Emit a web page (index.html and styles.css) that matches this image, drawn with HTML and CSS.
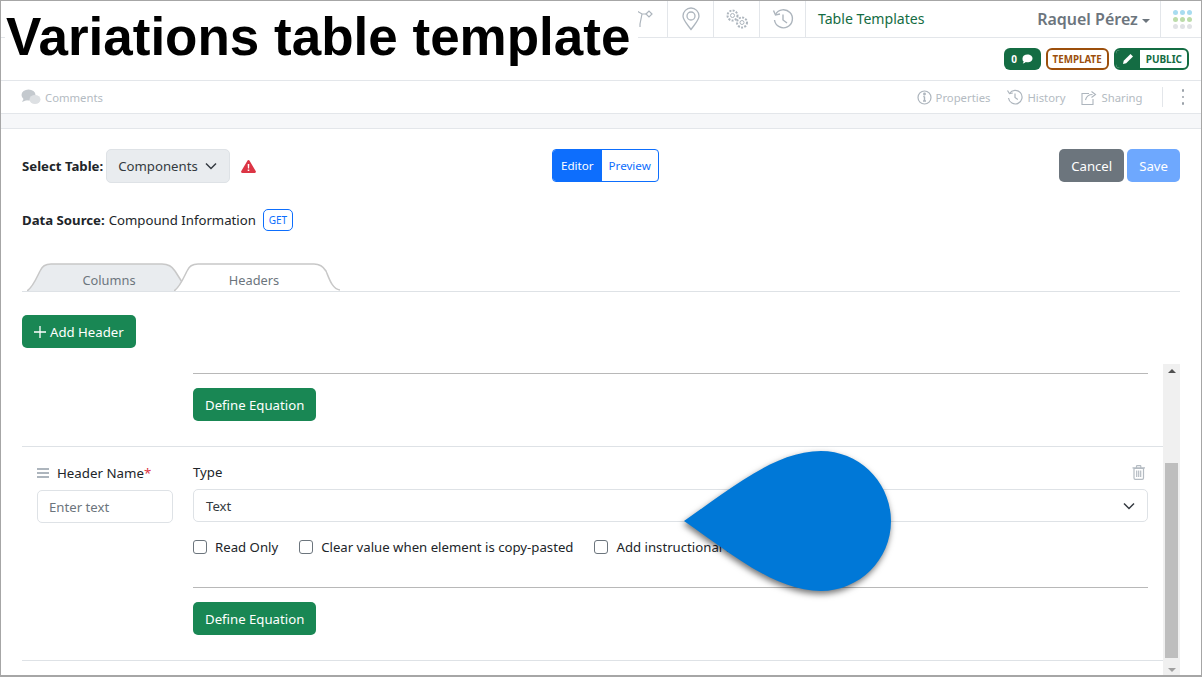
FILE: index.html
```html
<!DOCTYPE html>
<html lang="en">
<head>
    <meta charset="UTF-8">
    <title>Variations table template</title>
    <link rel="stylesheet" href="styles.css">
</head>
<body>

<div class="frame">
    <div class="topbar">
        <div class="nav-cell">
            <svg width="26" height="26" viewBox="0 0 26 26" fill="none" stroke="#adb5bd" stroke-width="1.200"><path d="M5 5l5 3h4M10 8l-2 10v3"/><path d="M14 8l3-3 3 3-3 3z"/></svg>
        </div>
        <div class="nav-cell">
            <svg width="20" height="24" viewBox="0 0 20 24" fill="none" stroke="#adb5bd" stroke-width="1.300"><path d="M10 22.500C6 17 2 13 2 9a8 8 0 0 1 16 0c0 4-4 8-8 13.500z"/><circle cx="10" cy="9" r="4"/></svg>
        </div>
        <div class="nav-cell">
            <svg width="26" height="24" viewBox="0 0 26 24" fill="none" stroke="#adb5bd"><circle cx="8.500" cy="8.500" r="2"/><circle cx="8.500" cy="8.500" r="5" stroke-width="2" stroke-dasharray="2 1.300"/><circle cx="18" cy="15.500" r="2"/><circle cx="18" cy="15.500" r="5" stroke-width="2" stroke-dasharray="2 1.300"/></svg>
        </div>
        <div class="nav-cell">
            <svg width="24" height="24" viewBox="0 0 24 24" fill="none" stroke="#adb5bd" stroke-width="1.400"><path d="M4.500 7.500A9 9 0 1 1 3.500 13"/><path d="M2.500 3.500l2 4.500 4.500-1M12 7.500V13l4 3"/></svg>
        </div>
        <div class="app-name">Table Templates</div>
        <div class="user">Raquel Pérez <span class="caret"></span></div>
        <div class="apps">
            <span class="dot blue"></span><span class="dot blue"></span><span class="dot blue"></span>
            <span class="dot green"></span><span class="dot green"></span><span class="dot green"></span>
            <span class="dot grey"></span><span class="dot grey"></span><span class="dot grey"></span>
        </div>
    </div>

    <div class="status-row">
        <span class="badge-comments">0
            <svg width="11" height="10" viewBox="0 0 11 10" fill="#fff"><path d="M5.500 0.500c2.800 0 5 1.700 5 3.900s-2.200 3.900-5 3.900c-.6 0-1.100-.1-1.600-.2-.9.8-2 1.200-3.300 1.300.6-.6 1-1.300 1.200-2.100C.900 7.600.500 6.100.500 4.400.500 2.200 2.700.500 5.500.500z"/></svg>
        </span>
        <span class="badge-template">TEMPLATE</span>
        <span class="badge-public">
            <span class="public-icon"><svg width="12" height="12" viewBox="0 0 12 12" fill="#fff"><path d="M8.500 1l2.500 2.500-6.800 6.800L1 11l.7-3.200z"/></svg></span>
            <span class="public-text">PUBLIC</span>
        </span>
    </div>

    <div class="action-row">
        <div class="action">
            <svg width="20" height="16" viewBox="0 0 20 16" fill="#c4c9ce"><ellipse cx="7.500" cy="6" rx="7" ry="5.500"/><path d="M3 9l-2 4 5-2z"/><ellipse cx="14" cy="10.500" rx="5.500" ry="4.500" fill="#dde0e3"/></svg>
            Comments
        </div>
        <div class="action-right">
            <div class="action">
                <svg width="15" height="15" viewBox="0 0 15 15" fill="none" stroke="#adb5bd" stroke-width="1.200"><circle cx="7.500" cy="7.500" r="6.500"/><path d="M7.500 6.500v4.500M6 11h3M6.300 6.500h1.200" stroke-width="1.400"/><circle cx="7.500" cy="4" r=".8" fill="#adb5bd"/></svg>
                Properties
            </div>
            <div class="action">
                <svg width="17" height="16" viewBox="0 0 17 16" fill="none" stroke="#adb5bd" stroke-width="1.200"><path d="M3.500 4.500A6.800 6.800 0 1 1 2.500 9"/><path d="M1.500 1.500l2 3.200 3.300-.7M9 4.500V8.500l2.800 2"/></svg>
                History
            </div>
            <div class="action">
                <svg width="16" height="15" viewBox="0 0 16 15" fill="none" stroke="#adb5bd" stroke-width="1.100"><path d="M8 3.500H1v11h11V9"/><path d="M4.500 10C5.500 6 8 4.500 11.500 4.500M10.500 1.500l4 3-4 3"/></svg>
                Sharing
            </div>
            <div class="kebab"><span></span><span></span><span></span></div>
        </div>
    </div>

    <div class="strip"></div>

    <div class="content">
        <div class="toolbar">
            <div class="toolbar-left">
                <strong class="select-label">Select Table:</strong>
                <div class="table-select">Components
                    <svg width="12" height="8" viewBox="0 0 12 8" fill="none" stroke="#343a40" stroke-width="1.500"><path d="M1 1.500l5 5 5-5"/></svg>
                </div>
                <svg class="warn" width="15" height="13" viewBox="0 0 15 13"><path d="M7.500 0c.5 0 .9.300 1.100.700l6.200 10.500c.4.800-.1 1.800-1.100 1.800H1.300C.3 13-.2 12 .2 11.200L6.400.700C6.600.300 7 0 7.500 0z" fill="#dc3545"/><path d="M6.700 4h1.600l-.2 4.500H6.900zM6.700 9.500h1.600v1.600H6.700z" fill="#fff"/></svg>
            </div>
            <div class="mode-group">
                <span class="mode active">Editor</span>
                <span class="mode">Preview</span>
            </div>
            <div class="toolbar-right">
                <button class="btn btn-cancel">Cancel</button>
                <button class="btn btn-save">Save</button>
            </div>
        </div>

        <div class="data-source">
            <strong>Data Source:</strong> Compound Information
            <span class="get-tag">GET</span>
        </div>

        <div class="tabs">
            <div class="tab">
                <svg class="tab-shape" width="156" height="28" viewBox="0 0 156 28"><path d="M0 28C6 24 9 16 13 8 15 3 19 1 24 1H135C141 1 145 3 148 8L155 19 151 28z" fill="#e9ecef"/><path d="M0 28C6 24 9 16 13 8 15 3 19 1 24 1H135C141 1 145 3 148 8L155 19" fill="none" stroke="#c8c8c8" stroke-width="1.500"/></svg>
                <span class="tab-text">Columns</span>
            </div>
            <div class="tab tab-current">
                <svg class="tab-shape" width="166" height="28" viewBox="0 0 166 28"><path d="M0 28C6 24 9 16 13 8 15 3 19 1 24 1H140C146 1 149 3 152 8 155 15 158 26 166 27V28z" fill="#fff"/><path d="M0 28C6 24 9 16 13 8 15 3 19 1 24 1H140C146 1 149 3 152 8 155 15 158 26 166 27" fill="none" stroke="#c8c8c8" stroke-width="1.500"/></svg>
                <span class="tab-text">Headers</span>
            </div>
        </div>

        <button class="btn btn-green btn-add">
            <svg width="12" height="12" viewBox="0 0 12 12" stroke="#fff" stroke-width="1.300"><path d="M6 0v12M0 6h12"/></svg>
            Add Header
        </button>

        <div class="scroll-area">
            <div class="rows">
                <div class="row row-partial">
                    <div class="row-main">
                        <hr class="rule">
                        <button class="btn btn-green">Define Equation</button>
                    </div>
                </div>
                <div class="row">
                    <div class="row-name">
                        <div class="name-label">
                            <span class="grip"><span></span><span></span><span></span></span>
                            Header Name<span class="required">*</span>
                        </div>
                        <div class="text-input">Enter text</div>
                    </div>
                    <div class="row-main">
                        <div class="type-head">
                            Type
                            <svg width="13" height="15" viewBox="0 0 13 15" fill="none" stroke="#b4bbc2" stroke-width="1.200"><path d="M2 3.500h9.500V13c0 .8-.5 1.300-1.300 1.300H3.300C2.500 14.300 2 13.800 2 13zM.5 2.800h12.500M4.500 2.500V1.200C4.500 .8 4.800 .6 5.200 .6h3c.4 0 .6 .2 .6 .6v1.300M4.700 5.500v6.500M6.700 5.500v6.500M8.700 5.500v6.500"/></svg>
                        </div>
                        <div class="type-select">Text
                            <svg width="12" height="8" viewBox="0 0 12 8" fill="none" stroke="#343a40" stroke-width="1.500"><path d="M1 1.500l5 5 5-5"/></svg>
                        </div>
                        <div class="checks">
                            <label class="check"><span class="box"></span>Read Only</label>
                            <label class="check"><span class="box"></span>Clear value when element is copy-pasted</label>
                            <label class="check"><span class="box"></span>Add instructional text</label>
                        </div>
                        <hr class="rule">
                        <button class="btn btn-green">Define Equation</button>
                    </div>
                </div>
            </div>
            <div class="scrollbar">
                <span class="arrow-up"></span>
                <div class="thumb-space"><div class="thumb"></div></div>
                <span class="arrow-down"></span>
            </div>
        </div>
    </div>

    <h1 class="title">Variations table template</h1>

    <svg class="drop" width="220" height="150" viewBox="0 0 220 150"><path d="M4 70C50 38 95 0 141 0 179 0 211 31 211 70 211 109 179 140 141 140 95 140 50 102 4 70z" fill="#0078d7"/></svg>
</div>

</body>
</html>
```

FILE: styles.css
```css
* {
    box-sizing: border-box;
}
body {
    margin: 0;
    font-family: "Noto Sans", Arial, sans-serif;
    font-size: 13.200px;
    color: #212529;
    background-color: #fff;
    overflow: hidden;
}
.frame {
    position: relative;
    width: 1202px;
    height: 677px;
    border: 1px solid #a6a6a6;
    border-bottom-width: 2px;
    overflow: hidden;
}
.topbar {
    display: flex;
    align-items: stretch;
    height: 37px;
    padding-left: 621px;
    border-bottom: 1px solid #e3e6ea;
}
.nav-cell {
    display: flex;
    align-items: center;
    justify-content: center;
    width: 46px;
    border-right: 1px solid #e3e6ea;
}
.app-name {
    padding-left: 12px;
    line-height: 36px;
    font-size: 14.100px;
    color: #146c43;
}
.user {
    margin-left: auto;
    padding-right: 10px;
    line-height: 36px;
    font-size: 16px;
    font-weight: 600;
    color: #6c757d;
}
.caret {
    display: inline-block;
    margin-left: 0;
    vertical-align: 2px;
    border-top: 4px solid #6c757d;
    border-left: 4px solid transparent;
    border-right: 4px solid transparent;
}
.apps {
    display: grid;
    grid-template-columns: repeat(3, 5px);
    gap: 2px;
    align-content: center;
    width: 41px;
    padding-left: 12px;
    border-left: 1px solid #e3e6ea;
}
.dot {
    width: 5px;
    height: 5px;
    border-radius: 50%;
}
.dot.blue {
    background-color: #a8dcf0;
}
.dot.green {
    background-color: #bcdcaa;
}
.dot.grey {
    background-color: #e0e2e5;
}
.status-row {
    display: flex;
    justify-content: flex-end;
    align-items: center;
    gap: 5px;
    height: 43px;
    padding-right: 12px;
    border-bottom: 1px solid #e3e6ea;
    font-size: 10px;
    font-weight: 700;
}
.badge-comments {
    display: flex;
    align-items: center;
    justify-content: center;
    gap: 5px;
    width: 37px;
    height: 22px;
    border-radius: 6px;
    background-color: #146c43;
    color: #fff;
}
.badge-template {
    display: flex;
    align-items: center;
    height: 22px;
    padding: 0 5px;
    border: 2px solid #9c4f0c;
    border-radius: 6px;
    font-size: 9.800px;
    color: #9c4f0c;
    white-space: nowrap;
}
.badge-public {
    display: flex;
    height: 22px;
    border: 2px solid #146c43;
    border-radius: 6px;
    overflow: hidden;
    color: #146c43;
}
.public-icon {
    display: flex;
    align-items: center;
    justify-content: center;
    width: 24px;
    background-color: #146c43;
}
.public-text {
    padding: 0 5px 0 6px;
    line-height: 18px;
}
.action-row {
    display: flex;
    justify-content: space-between;
    align-items: center;
    height: 33px;
    padding-left: 20px;
    padding-right: 17px;
    border-bottom: 1px solid #e3e6ea;
    font-size: 11.300px;
    color: #b4bbc2;
}
.action {
    display: flex;
    align-items: center;
    gap: 4px;
}
.action-right {
    display: flex;
    align-items: center;
    gap: 16px;
}
.kebab {
    display: flex;
    flex-direction: column;
    gap: 4px;
    height: 20px;
    justify-content: center;
    margin-left: 3px;
    padding-left: 19px;
    border-left: 1px solid #e3e6ea;
}
.kebab span {
    width: 2.500px;
    height: 2.500px;
    border-radius: 50%;
    background-color: #9aa1a8;
}
.strip {
    height: 15px;
    background-color: #f6f7f9;
    border-bottom: 1px solid #e3e6ea;
}
.content {
    padding: 20px 21px 0;
}
.toolbar {
    display: flex;
    align-items: flex-start;
    height: 34px;
}
.toolbar-left {
    display: flex;
    align-items: center;
    width: 530px;
}
.select-label {
    margin-right: 3px;
}
.table-select {
    display: flex;
    align-items: center;
    justify-content: space-between;
    width: 124px;
    height: 34px;
    padding: 0 12px 0 11px;
    border: 1px solid #dee2e6;
    border-radius: 5px;
    background-color: #e9ecef;
    color: #343a40;
}
.warn {
    margin-left: 11px;
}
.mode-group {
    display: flex;
    height: 33px;
    border: 1px solid #0d6efd;
    border-radius: 4px;
    overflow: hidden;
    font-size: 11.600px;
    line-height: 31px;
    color: #0d6efd;
}
.mode {
    padding: 0 7px;
}
.mode.active {
    padding: 0 8px;
    background-color: #0d6efd;
    color: #fff;
}
.toolbar-right {
    display: flex;
    flex: 1;
    justify-content: flex-end;
    gap: 3px;
}
.btn {
    display: inline-flex;
    align-items: center;
    justify-content: center;
    height: 33px;
    padding: 0 12px;
    border: none;
    border-radius: 5px;
    font-family: inherit;
    font-size: 13.200px;
    color: #fff;
}
.btn-cancel {
    background-color: #6c757d;
}
.btn-save {
    background-color: #6ea8fe;
}
.btn-green {
    background-color: #198754;
}
.data-source {
    display: flex;
    align-items: center;
    gap: 4px;
    height: 22px;
    margin-top: 26px;
}
.get-tag {
    display: inline-flex;
    align-items: center;
    justify-content: center;
    width: 30px;
    height: 22px;
    margin-left: 3px;
    border: 1px solid #0d6efd;
    border-radius: 5px;
    font-size: 10px;
    color: #0d6efd;
}
.tabs {
    display: flex;
    height: 29px;
    margin-top: 32px;
    padding-left: 5px;
    border-bottom: 1px solid #dee2e6;
}
.tab {
    position: relative;
    width: 156px;
    height: 28px;
    text-align: center;
    font-size: 12.800px;
    line-height: 34px;
    color: #6c757d;
}
.tab-current {
    width: 166px;
    margin-left: -9px;
}
.tab-shape {
    position: absolute;
    top: 0;
    left: 0;
}
.tab-text {
    position: relative;
    left: 4px;
}
.tab-current .tab-text {
    left: -3px;
}
.btn-add {
    gap: 4px;
    margin-top: 23px;
}
.scroll-area {
    display: flex;
    height: 313px;
    margin-top: 16px;
    overflow: hidden;
}
.rows {
    flex: 1;
    min-width: 0;
}
.row {
    display: flex;
    padding: 16px 15px 25px 15px;
    border-bottom: 1px solid #dee2e6;
}
.row-partial {
    padding-top: 9px;
    padding-left: 171px;
}
.row-name {
    width: 136px;
    margin-right: 20px;
}
.name-label {
    display: flex;
    align-items: center;
    gap: 8px;
    height: 20px;
    margin-bottom: 7px;
    font-size: 13.300px;
}
.grip {
    display: flex;
    flex-direction: column;
    gap: 2px;
}
.grip span {
    width: 12px;
    height: 2px;
    background-color: #adb5bd;
}
.required {
    margin-left: -8px;
    color: #dc3545;
}
.text-input {
    height: 33px;
    padding: 0 11px;
    border: 1px solid #dee2e6;
    border-radius: 5px;
    line-height: 32px;
    color: #6c757d;
}
.row-main {
    flex: 1;
    min-width: 0;
}
.type-head {
    display: flex;
    justify-content: space-between;
    align-items: center;
    height: 20px;
    margin-top: -1px;
    margin-bottom: 7px;
}
.type-head svg {
    margin-right: 3px;
}
.type-select {
    display: flex;
    justify-content: space-between;
    align-items: center;
    height: 33px;
    padding: 0 12px;
    border: 1px solid #dee2e6;
    border-radius: 5px;
    color: #343a40;
}
.checks {
    display: flex;
    gap: 21px;
    margin-top: 15px;
    height: 20px;
}
.check {
    display: flex;
    align-items: center;
    gap: 8px;
}
.box {
    width: 14px;
    height: 14px;
    border: 1px solid #6c757d;
    border-radius: 3px;
}
.rule {
    height: 1px;
    margin: 30px 0 14px;
    border: none;
    background-color: #b8b8b8;
}
.row-partial .rule {
    margin-top: 0;
}
.scrollbar {
    display: flex;
    flex-direction: column;
    align-items: center;
    width: 17px;
    background-color: #f0f0f0;
}
.arrow-up {
    margin-top: 5px;
    border-bottom: 4px solid #505050;
    border-left: 4px solid transparent;
    border-right: 4px solid transparent;
}
.thumb-space {
    flex: 1;
    width: 13px;
    padding-top: 90px;
}
.thumb {
    height: 195px;
    background-color: #bebebe;
}
.arrow-down {
    margin-bottom: 5px;
    border-top: 4px solid #a0a0a0;
    border-left: 4px solid transparent;
    border-right: 4px solid transparent;
}
.title {
    position: absolute;
    top: 0;
    left: 4px;
    margin: 0;
    padding: 0 8px 0 1px;
    height: 68px;
    background-color: #fff;
    font-family: "Liberation Sans", Arial, sans-serif;
    font-size: 53px;
    font-weight: 700;
    line-height: 72px;
    color: #000;
    white-space: nowrap;
}
.drop {
    position: absolute;
    top: 450px;
    left: 679px;
    filter: drop-shadow(-1px 3px 3px rgba(0, 0, 0, 0.55));
}
```
